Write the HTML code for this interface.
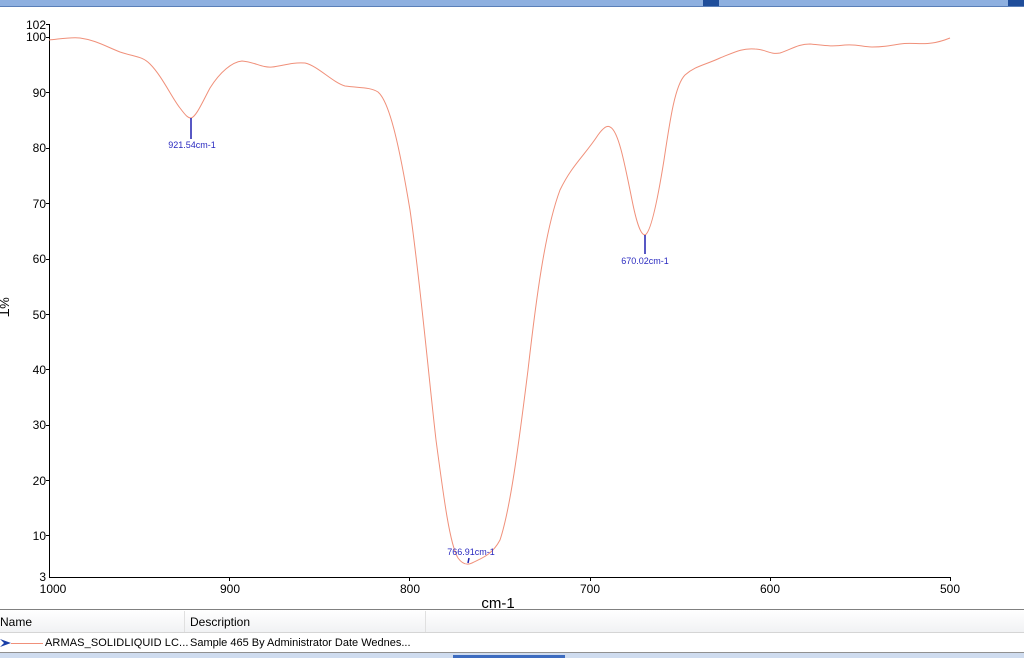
<!DOCTYPE html>
<html><head><style>
body{margin:0;width:1024px;height:658px;overflow:hidden;background:#fff;font-family:"Liberation Sans",Arial,sans-serif;position:relative}
.a{position:absolute}
</style></head><body>
<div class="a" style="left:0;top:0;width:1024px;height:6px;background:#8eb0e0;border-bottom:1px solid #5a7fb8"></div>
<div class="a" style="left:703px;top:0;width:16px;height:6px;background:#1f4d9a"></div>
<div class="a" style="left:1008px;top:0;width:16px;height:6px;background:#1f4d9a"></div>
<svg class="a" style="left:0;top:0" width="1024" height="610">
<g font-family="Liberation Sans, Arial, sans-serif" font-size="12" fill="#000" text-anchor="end">
<text x="46" y="29">102</text><text x="46" y="41">100</text>
<text x="46" y="97">90</text><text x="46" y="152">80</text><text x="46" y="208">70</text>
<text x="46" y="263">60</text><text x="46" y="319">50</text><text x="46" y="374">40</text>
<text x="46" y="429">30</text><text x="46" y="485">20</text><text x="46" y="540">10</text>
<text x="46" y="581">3</text>
</g>
<g stroke="#000" stroke-width="1">
<line x1="49.5" y1="24" x2="49.5" y2="577"/>
<line x1="49" y1="577.5" x2="951" y2="577.5"/>
<line x1="46" y1="24.5" x2="49" y2="24.5"/><line x1="46" y1="37.5" x2="49" y2="37.5"/>
<line x1="46" y1="92.5" x2="49" y2="92.5"/><line x1="46" y1="148.5" x2="49" y2="148.5"/>
<line x1="46" y1="203.5" x2="49" y2="203.5"/><line x1="46" y1="259.5" x2="49" y2="259.5"/>
<line x1="46" y1="314.5" x2="49" y2="314.5"/><line x1="46" y1="369.5" x2="49" y2="369.5"/>
<line x1="46" y1="425.5" x2="49" y2="425.5"/><line x1="46" y1="480.5" x2="49" y2="480.5"/>
<line x1="46" y1="535.5" x2="49" y2="535.5"/>
<line x1="229.5" y1="577" x2="229.5" y2="581"/><line x1="409.5" y1="577" x2="409.5" y2="581"/>
<line x1="590.5" y1="577" x2="590.5" y2="581"/><line x1="770.5" y1="577" x2="770.5" y2="581"/>
<line x1="950.5" y1="577" x2="950.5" y2="581"/>
</g>
<g font-family="Liberation Sans, Arial, sans-serif" font-size="12" text-anchor="middle">
<text x="53" y="593">1000</text><text x="230" y="593">900</text><text x="410" y="593">800</text>
<text x="590" y="593">700</text><text x="770" y="593">600</text><text x="950" y="593">500</text>
<text x="498" y="608" font-size="15">cm-1</text>
</g>
<text transform="translate(0,307) rotate(90)" font-size="13" font-family="Liberation Sans, Arial, sans-serif" text-anchor="middle">%T</text>
<path fill="none" stroke="#f0907a" stroke-width="1" d="M49,40 C60,39 70,37 80,38 C95,40 105,46 120,52 C135,57 142,56 150,64 C162,76 172,98 180,108 C186,116 188,118 191,118 C196,117 202,103 210,88 C220,72 232,62 242,61 C255,62 262,68 272,67 C282,66 292,62 305,63 C318,66 332,82 345,86 C360,88 370,87 378,92 C390,102 400,150 410,210 C420,280 428,370 436,440 C444,500 450,545 458,558 C463,565 468,565 472,563 C482,558 492,555 500,540 C510,510 518,450 528,370 C536,300 545,230 560,190 C572,165 585,155 598,135 C603,128 607,125 610,127 C618,130 624,160 632,200 C637,225 641,235 645,235 C650,233 656,210 664,160 C670,120 675,85 685,75 C695,66 705,65 720,58 C735,52 742,48 755,49 C765,49 770,55 780,53 C792,49 798,44 810,44 C822,45 830,47 845,45 C858,44 862,47 872,47 C882,47 888,46 900,44 C912,42 920,45 932,43 C940,42 945,40 950,38"/>
<g stroke="#2020b0" stroke-width="1.5">
<line x1="191" y1="118" x2="191" y2="139"/>
<line x1="645" y1="235" x2="645" y2="254"/>
<line x1="469" y1="558" x2="468" y2="563"/>
</g>
<g font-family="Liberation Sans, Arial, sans-serif" font-size="9" fill="#2a2ac0" text-anchor="middle">
<text x="192" y="148">921.54cm-1</text>
<text x="645" y="264">670.02cm-1</text>
<text x="471" y="555">766.91cm-1</text>
</g>
</svg>
<div class="a" style="left:0;top:609px;width:1024px;height:1px;background:#808080"></div>
<div class="a" style="left:0;top:610px;width:1024px;height:22px;background:linear-gradient(#fff,#f1f2f4);border-bottom:1px solid #d5d5d5"></div>
<div class="a" style="left:0;top:615px;font-size:12px">Name</div>
<div class="a" style="left:184px;top:611px;width:1px;height:21px;background:#e0e0e0"></div>
<div class="a" style="left:190px;top:615px;font-size:12px">Description</div>
<div class="a" style="left:425px;top:611px;width:1px;height:21px;background:#e0e0e0"></div>
<svg class="a" style="left:0;top:637px" width="45" height="12"><path d="M0,2 L11,6 L0,10 L4,6Z" fill="#1a3fa8"/><line x1="11" y1="6.5" x2="43" y2="6.5" stroke="#f0907a"/></svg>
<div class="a" style="left:45px;top:637px;font-size:11px;letter-spacing:0.1px">ARMAS_SOLIDLIQUID LC...</div>
<div class="a" style="left:190px;top:637px;font-size:11px">Sample 465 By Administrator Date Wednes...</div>
<div class="a" style="left:0;top:652px;width:1024px;height:1px;background:#909090"></div>
<div class="a" style="left:0;top:653px;width:1024px;height:5px;background:#cfdcef"></div>
<div class="a" style="left:453px;top:655px;width:112px;height:3px;background:#3d6cc0"></div>
</body></html>
